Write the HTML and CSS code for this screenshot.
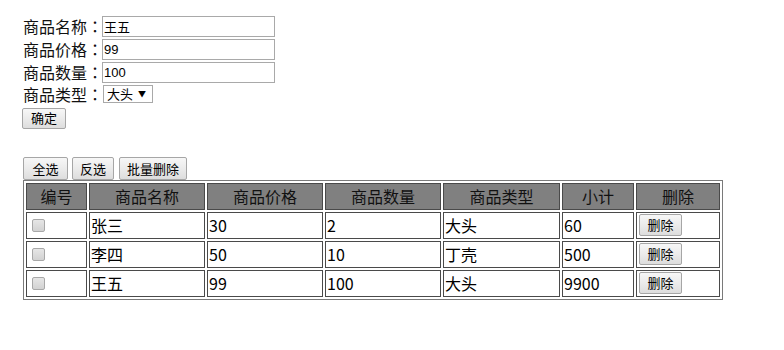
FILE: index.html
```html
<!DOCTYPE html>
<html lang="zh-CN">
<head>
<meta charset="utf-8">
<title>商品管理</title>
<link rel="stylesheet" href="styles.css">
</head>
<body>
<div class="page">
  <form class="goods-form">
    <div class="form-row"><span class="label">商品名称<span class="colon" lang="zh-TW">：</span></span><input class="text-input" type="text" value="王五"></div>
    <div class="form-row"><span class="label">商品价格<span class="colon" lang="zh-TW">：</span></span><input class="text-input" type="text" value="99"></div>
    <div class="form-row"><span class="label">商品数量<span class="colon" lang="zh-TW">：</span></span><input class="text-input" type="text" value="100"></div>
    <div class="form-row form-row-select"><span class="label">商品类型<span class="colon" lang="zh-TW">：</span></span><span class="select-wrap"><select class="type-select"><option>大头</option><option>丁壳</option></select></span></div>
    <div class="submit-row"><button type="button" class="btn btn-submit">确定</button></div>
  </form>

  <div class="toolbar">
    <button type="button" class="btn btn-tool">全选</button>
    <button type="button" class="btn btn-tool">反选</button>
    <button type="button" class="btn btn-tool">批量删除</button>
  </div>

  <table class="grid">
    <colgroup>
      <col class="c1"><col class="c2"><col class="c3"><col class="c4"><col class="c5"><col class="c6"><col class="c7">
    </colgroup>
    <thead>
      <tr><th>编号</th><th>商品名称</th><th>商品价格</th><th>商品数量</th><th>商品类型</th><th>小计</th><th>删除</th></tr>
    </thead>
    <tbody>
      <tr><td><input type="checkbox" class="check"></td><td>张三</td><td>30</td><td>2</td><td>大头</td><td>60</td><td><button type="button" class="btn btn-del">删除</button></td></tr>
      <tr><td><input type="checkbox" class="check"></td><td>李四</td><td>50</td><td>10</td><td>丁壳</td><td>500</td><td><button type="button" class="btn btn-del">删除</button></td></tr>
      <tr><td><input type="checkbox" class="check"></td><td>王五</td><td>99</td><td>100</td><td>大头</td><td>9900</td><td><button type="button" class="btn btn-del">删除</button></td></tr>
    </tbody>
  </table>
</div>
</body>
</html>
```
FILE: styles.css
```css
html, body {
  margin: 0;
  background: #fff;
}
body {
  font-family: "Noto Sans CJK SC", "Microsoft YaHei", sans-serif;
  color: #000;
}
.page {
  padding: 15px 0 0 23px;
}
.goods-form {
  margin: 0;
}
.form-row {
  display: flex;
  align-items: center;
  height: 23px;
  font-size: 16px;
  line-height: 23px;
}
.form-row-select {
  height: 20px;
  line-height: 20px;
}
.label {
  width: 80px;
  white-space: nowrap;
  color: #111;
}
.colon {
  font-family: "Noto Sans CJK TC", "Noto Sans CJK SC", sans-serif;
}
.text-input {
  box-sizing: border-box;
  width: 173px;
  height: 21px;
  margin: 0 0 0 -1px;
  padding: 0 1px;
  border: 1px solid #a9a9a9;
  font-family: "Liberation Sans", "Noto Sans CJK SC", sans-serif;
  font-size: 13px;
  color: #000;
  outline: none;
}
.select-wrap {
  position: relative;
  display: flex;
}
.type-select {
  -webkit-appearance: none;
  appearance: none;
  box-sizing: border-box;
  width: 50px;
  height: 18px;
  margin: 0;
  padding: 0 0 0 3px;
  border: 1px solid #a9a9a9;
  border-radius: 0;
  background: #fff;
  font-family: "Noto Sans CJK SC", sans-serif;
  font-size: 13px;
  line-height: 16px;
  color: #000;
}
.select-wrap::after {
  content: "▼";
  position: absolute;
  right: 7px;
  top: 4px;
  font-size: 8px;
  line-height: 10px;
  color: #000;
  pointer-events: none;
}
.submit-row {
  height: 21px;
}
.btn {
  box-sizing: border-box;
  margin: 0;
  padding: 0 7px;
  border: 1px solid #a6a6a6;
  border-radius: 2px;
  background: linear-gradient(to bottom, #f7f7f7 0%, #ebebeb 50%, #dddddd 100%);
  font-family: "Noto Sans CJK SC", sans-serif;
  font-size: 13px;
  color: #000;
  line-height: 18px;
}
.btn-submit {
  height: 21px;
  margin-left: -1px;
  width: 44px;
}
.toolbar {
  display: flex;
  gap: 4px;
  margin-top: 32px;
  height: 23px;
}
.btn-tool {
  height: 23px;
}
.btn-tool:nth-child(1) {
  width: 45px;
}
.btn-tool:nth-child(2) {
  width: 42px;
}
.btn-tool:nth-child(3) {
  width: 68px;
  margin-left: 1px;
}
.grid {
  width: 700px;
  table-layout: fixed;
  border: 1px solid #7a7a7a;
  border-spacing: 2px;
  font-size: 16px;
}
.c1 { width: 61px; }
.c2 { width: 116px; }
.c3 { width: 116px; }
.c4 { width: 116px; }
.c5 { width: 117px; }
.c6 { width: 72px; }
.c7 { width: 84px; }
.grid th,
.grid td {
  border: 1px solid #4a4a4a;
  padding: 1px 1px;
  height: 23px;
  line-height: 23px;
  white-space: nowrap;
  overflow: hidden;
}
.grid th {
  background: #808080;
  font-weight: normal;
  text-align: center;
  color: #111;
}
.grid td {
  text-align: left;
  vertical-align: middle;
}
.check {
  -webkit-appearance: none;
  appearance: none;
  box-sizing: border-box;
  width: 13px;
  height: 13px;
  margin: 5px 3px 0 4px;
  border: 1px solid #a8a8a8;
  border-radius: 2px;
  background: linear-gradient(to bottom, #e6e6e6, #d2d2d2);
  vertical-align: top;
}
.btn-del {
  width: 43px;
  height: 22px;
  vertical-align: top;
  padding: 0;
  margin-left: 1px;
}
```
